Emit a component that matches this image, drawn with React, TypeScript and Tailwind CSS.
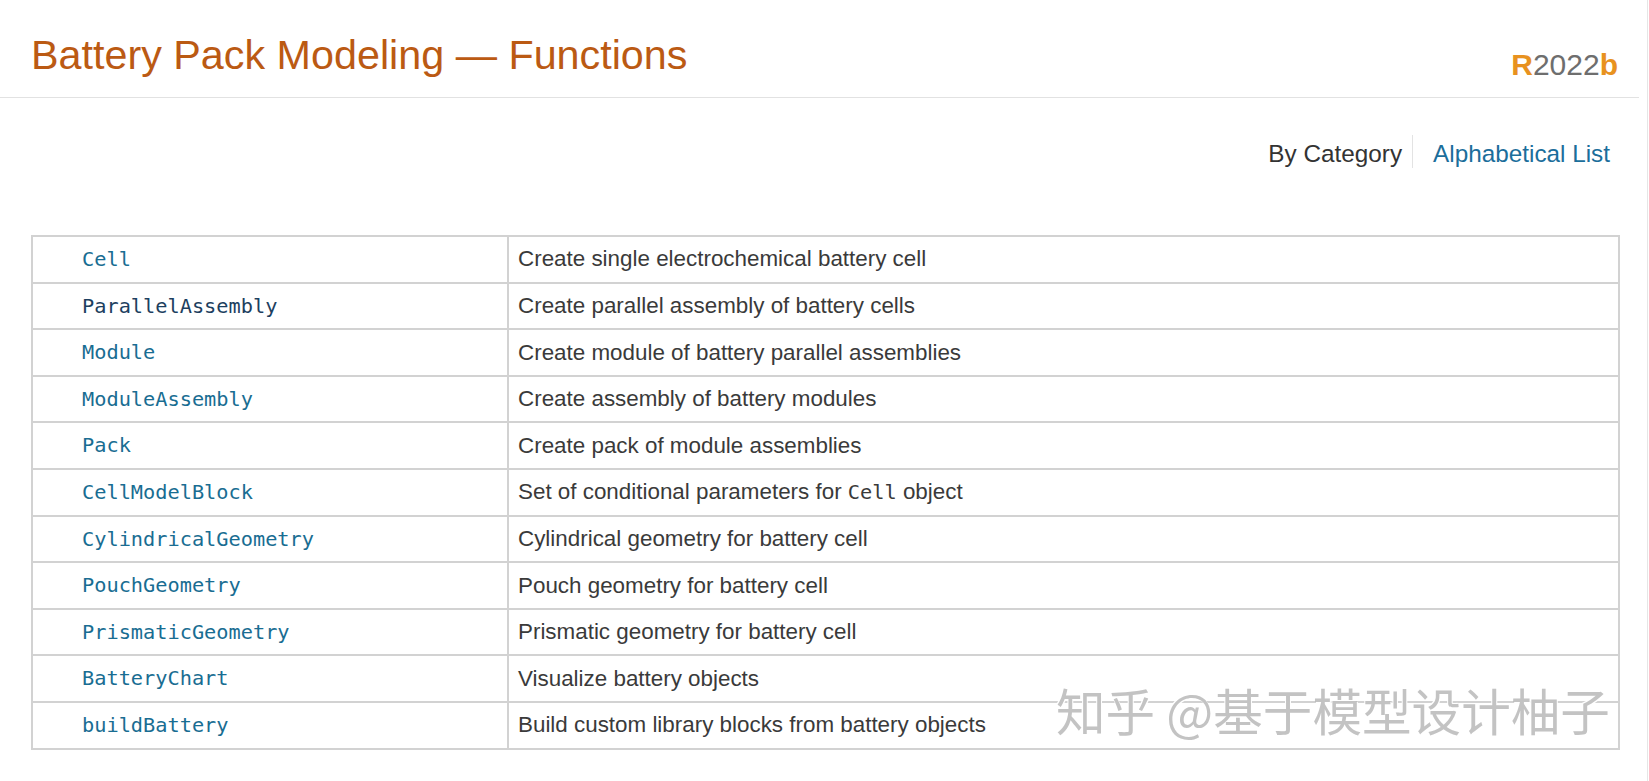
import React from "react"

const rows = [
  { name: "Cell", desc: "Create single electrochemical battery cell" },
  { name: "ParallelAssembly", desc: "Create parallel assembly of battery cells", visited: true },
  { name: "Module", desc: "Create module of battery parallel assemblies" },
  { name: "ModuleAssembly", desc: "Create assembly of battery modules" },
  { name: "Pack", desc: "Create pack of module assemblies" },
  { name: "CellModelBlock", desc: "", special: true },
  { name: "CylindricalGeometry", desc: "Cylindrical geometry for battery cell" },
  { name: "PouchGeometry", desc: "Pouch geometry for battery cell" },
  { name: "PrismaticGeometry", desc: "Prismatic geometry for battery cell" },
  { name: "BatteryChart", desc: "Visualize battery objects" },
  { name: "buildBattery", desc: "Build custom library blocks from battery objects" },
]

const sans = "font-['Liberation_Sans',Arial,sans-serif]"
const mono = "font-['DejaVu_Sans_Mono','Liberation_Mono',monospace]"

export default function App() {
  return (
    <div className={`relative w-[1648px] min-h-[781px] bg-white border-r border-[#e6e6e6] ${sans}`}>
      {/* Header */}
      <div className="flex items-start h-[98px] border-b border-[#e2e2e2] mr-[8px] pl-[31px] pr-[21px]">
        <h1 className="mt-[35px] text-[41.3px] leading-none text-[#bb5a13]">
          Battery Pack Modeling — Functions
        </h1>
        <div className="ml-auto mt-[50px] text-[30px] leading-none">
          <span className="font-bold text-[#e8921f]">R</span>
          <span className="text-[#6e6e6e]">2022</span>
          <span className="font-bold text-[#e8921f]">b</span>
        </div>
      </div>

      {/* Category switch */}
      <div className="flex justify-end items-start mt-[37px] pr-[37px] text-[24.3px] leading-none">
        <span className="mt-[7px] pr-[10px] text-[#333333]">By Category</span>
        <div className="h-[33px] border-l border-[#e3e3e3]" />
        <span className="mt-[7px] pl-[20px] text-[#1b6e9b]">Alphabetical List</span>
      </div>

      {/* Function table */}
      <div className="mt-[67px] ml-[31px] w-[1589px] border-2 border-[#d2d2d2]">
        {rows.map((r, i) => (
          <div
            key={r.name}
            className={`flex ${i < rows.length - 1 ? "h-[46.6px] border-b-2 border-[#d2d2d2]" : "h-[44.6px]"}`}
          >
            <div className="w-[474px] flex items-center pl-[49px]">
              <span className={`${mono} text-[20.3px] ${r.visited ? "text-[#1d3f5f]" : "text-[#196d92]"}`}>
                {r.name}
              </span>
            </div>
            <div className="flex-1 flex items-center border-l-2 border-[#d2d2d2] pl-[9px] text-[22.4px] text-[#3a3a3a]">
              {r.special ? (
                <span>
                  Set of conditional parameters for <span className={`${mono} text-[20.3px]`}>Cell</span> object
                </span>
              ) : (
                <span>{r.desc}</span>
              )}
            </div>
          </div>
        ))}
      </div>

      {/* Watermark */}
      <div className="absolute left-[1056px] top-[685px] text-[49.6px] leading-none whitespace-nowrap font-['Noto_Sans_CJK_SC',sans-serif] text-[#b4b4b4]/80 [text-shadow:1px_1px_0_#ffffff,-1px_-1px_0_#ffffff]">
        知乎 @基于模型设计柚子
      </div>
    </div>
  )
}
